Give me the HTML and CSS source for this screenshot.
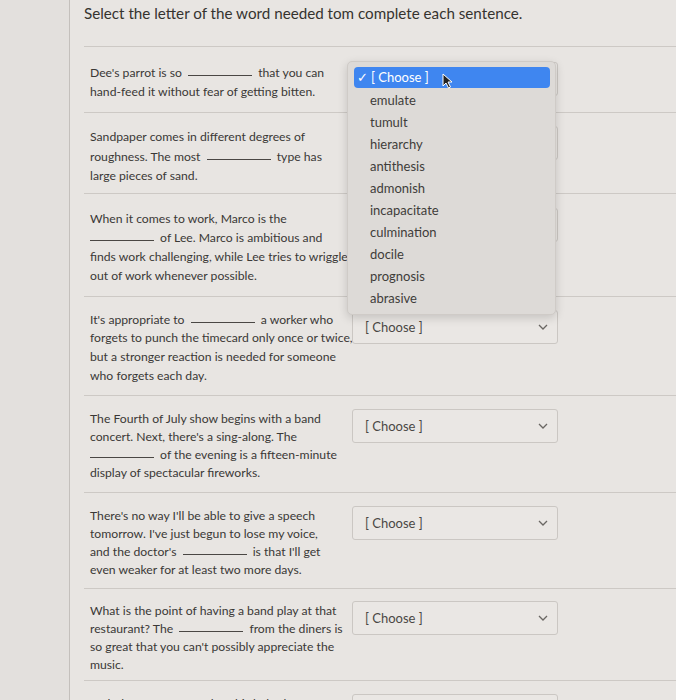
FILE: index.html
```html
<!DOCTYPE html>
<html lang="en">
<head>
<meta charset="utf-8">
<title>Select the letter</title>
<link rel="stylesheet" href="styles.css">
</head>
<body>
<div class="page">
  <div class="rail"></div>
  <div class="main">
    <h1 class="title">Select the letter of the word needed tom complete each sentence.</h1>

    <div class="row row-1">
      <p class="q">Dee's parrot is so <span class="blank"></span> that you can<br>hand-feed it without fear of getting bitten.</p>
      <div class="sel open">
        <span class="sel-text">[ Choose ]</span>
        <svg class="chev" width="10" height="6" viewBox="0 0 10 6"><polyline points="1,1 5,5 9,1" fill="none" stroke="#6a6763" stroke-width="1.3"/></svg>
        <div class="menu">
          <div class="opt active"><span class="check">✓</span>[ Choose ]
            <svg class="cursor" width="11" height="16" viewBox="0 0 11 16"><path d="M1 1 L1 13 L4 10 L6.5 15 L8.5 14 L6 9 L10 9 Z" fill="#222" stroke="#fff" stroke-width="1"/></svg>
          </div>
          <div class="opt">emulate</div>
          <div class="opt">tumult</div>
          <div class="opt">hierarchy</div>
          <div class="opt">antithesis</div>
          <div class="opt">admonish</div>
          <div class="opt">incapacitate</div>
          <div class="opt">culmination</div>
          <div class="opt">docile</div>
          <div class="opt">prognosis</div>
          <div class="opt">abrasive</div>
        </div>
      </div>
    </div>

    <div class="row row-2">
      <p class="q">Sandpaper comes in different degrees of<br>roughness. The most <span class="blank"></span> type has<br>large pieces of sand.</p>
      <div class="sel">
        <span class="sel-text">[ Choose ]</span>
        <svg class="chev" width="10" height="6" viewBox="0 0 10 6"><polyline points="1,1 5,5 9,1" fill="none" stroke="#6a6763" stroke-width="1.3"/></svg>
      </div>
    </div>

    <div class="row row-3">
      <p class="q">When it comes to work, Marco is the<br><span class="blank first"></span> of Lee. Marco is ambitious and<br>finds work challenging, while Lee tries to wriggle<br>out of work whenever possible.</p>
      <div class="sel">
        <span class="sel-text">[ Choose ]</span>
        <svg class="chev" width="10" height="6" viewBox="0 0 10 6"><polyline points="1,1 5,5 9,1" fill="none" stroke="#6a6763" stroke-width="1.3"/></svg>
      </div>
    </div>

    <div class="row row-4">
      <p class="q">It's appropriate to <span class="blank"></span> a worker who<br>forgets to punch the timecard only once or twice,<br>but a stronger reaction is needed for someone<br>who forgets each day.</p>
      <div class="sel">
        <span class="sel-text">[ Choose ]</span>
        <svg class="chev" width="10" height="6" viewBox="0 0 10 6"><polyline points="1,1 5,5 9,1" fill="none" stroke="#6a6763" stroke-width="1.3"/></svg>
      </div>
    </div>

    <div class="row">
      <p class="q">The Fourth of July show begins with a band<br>concert. Next, there's a sing-along. The<br><span class="blank first"></span> of the evening is a fifteen-minute<br>display of spectacular fireworks.</p>
      <div class="sel">
        <span class="sel-text">[ Choose ]</span>
        <svg class="chev" width="10" height="6" viewBox="0 0 10 6"><polyline points="1,1 5,5 9,1" fill="none" stroke="#6a6763" stroke-width="1.3"/></svg>
      </div>
    </div>

    <div class="row row-far">
      <p class="q">There's no way I'll be able to give a speech<br>tomorrow. I've just begun to lose my voice,<br>and the doctor's <span class="blank"></span> is that I'll get<br>even weaker for at least two more days.</p>
      <div class="sel">
        <span class="sel-text">[ Choose ]</span>
        <svg class="chev" width="10" height="6" viewBox="0 0 10 6"><polyline points="1,1 5,5 9,1" fill="none" stroke="#6a6763" stroke-width="1.3"/></svg>
      </div>
    </div>

    <div class="row row-far row-last">
      <p class="q">What is the point of having a band play at that<br>restaurant? The <span class="blank"></span> from the diners is<br>so great that you can't possibly appreciate the<br>music.</p>
      <div class="sel">
        <span class="sel-text">[ Choose ]</span>
        <svg class="chev" width="10" height="6" viewBox="0 0 10 6"><polyline points="1,1 5,5 9,1" fill="none" stroke="#6a6763" stroke-width="1.3"/></svg>
      </div>
    </div>

    <div class="row">
      <p class="q">Melody was so grateful for his help that<br>she could not stop thanking him.</p>
      <div class="sel">
        <span class="sel-text">[ Choose ]</span>
        <svg class="chev" width="10" height="6" viewBox="0 0 10 6"><polyline points="1,1 5,5 9,1" fill="none" stroke="#6a6763" stroke-width="1.3"/></svg>
      </div>
    </div>
  </div>
</div>
</body>
</html>
```

FILE: styles.css
```css
* { box-sizing: border-box; }

html, body {
  margin: 0;
  padding: 0;
  height: 700px;
  overflow: hidden;
}

body {
  background: #e8e5e2;
  font-family: Lato, "Open Sans", sans-serif;
  color: #3a3836;
}

.page {
  display: flex;
  min-height: 700px;
}

.rail {
  width: 70px;
  flex: 0 0 70px;
  background: #e3e0dd;
  border-right: 1px solid #c4c0bc;
}

.main {
  flex: 1;
  padding-left: 14px;
}

.title {
  margin: 0;
  padding: 2px 0 0 0;
  height: 46px;
  font-size: 15.2px;
  font-weight: 400;
  line-height: 22px;
  color: #35332f;
}

.row {
  display: flex;
  align-items: flex-start;
  border-top: 1px solid #cdc9c5;
  padding: 14px 0 9px 6px;
}

.q {
  margin: 0;
  width: 262px;
  flex: 0 0 262px;
  font-size: 12.2px;
  line-height: 18.3px;
  white-space: nowrap;
  color: #3a3836;
}

.row-1 { padding-top: 16px; padding-bottom: 11px; }
.row-1 .q { line-height: 19px; }
.row-2 { padding-bottom: 7px; }
.row-2 .q { line-height: 19.5px; }
.row-3 { padding-top: 15px; padding-bottom: 10px; }
.row-3 .q { line-height: 19.3px; }
.row-4 .q { line-height: 18.7px; }
.row-far .q { line-height: 18px; }
.row-last { padding-top: 13px; padding-bottom: 6px; }

.blank {
  display: inline-block;
  width: 64px;
  height: 0;
  border-bottom: 1px solid #4a4744;
  margin: 0 3px;
  vertical-align: 1px;
}

.blank.first {
  margin-left: 0;
}

.sel {
  position: relative;
  display: flex;
  align-items: center;
  justify-content: space-between;
  width: 206px;
  height: 34px;
  margin-top: -1px;
  padding: 0 9px 0 12px;
  border: 1px solid #cbc7c3;
  border-radius: 3px;
  background: #eae7e4;
}

.sel-text {
  font-size: 13px;
  color: #4a4744;
}

.menu {
  position: absolute;
  top: -2px;
  left: -6px;
  width: 209px;
  height: 254px;
  padding: 5px 5px 0 6px;
  background: #dddad7;
  border: 1px solid #cfcbc7;
  border-radius: 5px;
  box-shadow: 0 3px 10px rgba(0, 0, 0, 0.16);
  z-index: 5;
}

.opt {
  position: relative;
  height: 22px;
  line-height: 22px;
  padding-left: 16px;
  font-size: 13px;
  color: #3f3d3a;
}

.opt.active {
  height: 21px;
  line-height: 21px;
  padding-left: 3px;
  background: #3f86f0;
  color: #ffffff;
  border-radius: 4px;
  margin-bottom: 1px;
}

.check {
  display: inline-block;
  width: 14px;
}

.cursor {
  position: absolute;
  left: 88px;
  top: 6px;
}
```
